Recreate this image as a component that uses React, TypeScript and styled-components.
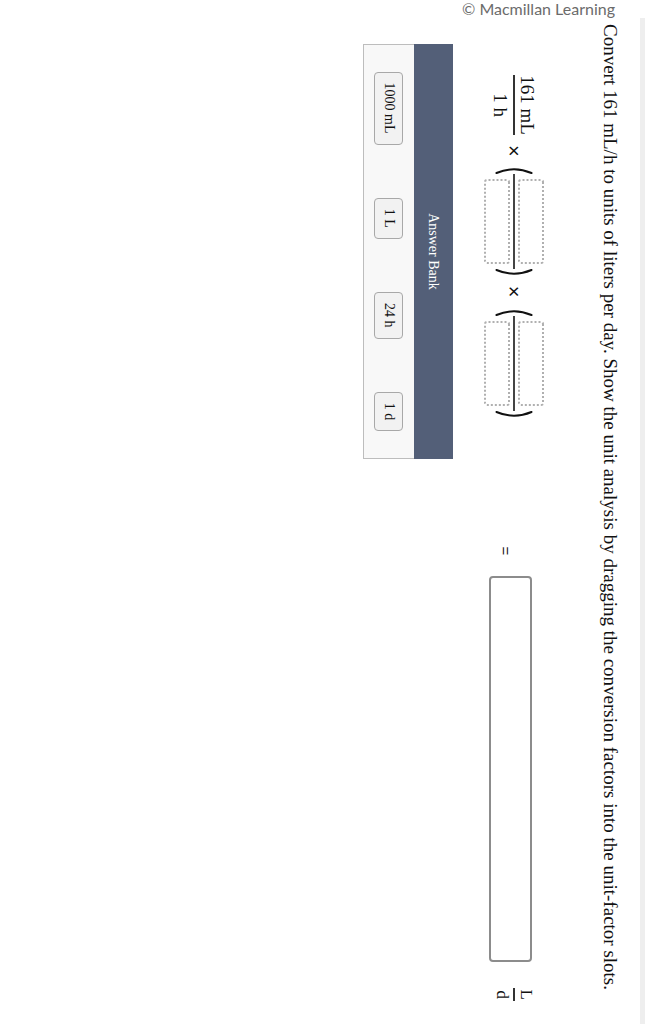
import React from 'react';
import styled, { createGlobalStyle } from 'styled-components';

const Global = createGlobalStyle`
  html, body { margin: 0; padding: 0; background: #ffffff; overflow: hidden; }
  #root { width: 645px; height: 1024px; }
`;

const Page = styled.div`
  position: relative;
  width: 645px;
  height: 1024px;
  overflow: hidden;
  background: #ffffff;
`;

const Copyright = styled.div`
  position: absolute;
  top: 0;
  right: 30px;
  font-family: Lato, "Noto Sans", sans-serif;
  font-size: 16px;
  line-height: 18px;
  color: #6b6b6b;
  white-space: nowrap;
`;

const Stage = styled.div`
  width: 1024px;
  height: 645px;
  display: flex;
  flex-direction: column;
  transform-origin: 0 0;
  transform: translateX(645px) rotate(90deg);
  font-family: "Liberation Serif", "Times New Roman", serif;
  color: #111111;
`;

const TopStrip = styled.div`
  margin-left: 18px;
  height: 5px;
  background: #eeeeee;
`;

const Instruction = styled.p`
  margin: 19px 0 0 24px;
  font-size: 19px;
  line-height: 22px;
  white-space: nowrap;
`;

const EquationRow = styled.div`
  display: flex;
  align-items: center;
  height: 70px;
  margin-top: 50px;
  padding-left: 75px;
`;

const Fraction = styled.div`
  display: flex;
  flex-direction: column;
  align-items: center;
  font-size: 19px;
  line-height: 21px;
`;

const FracLine = styled.div<{ $w: number }>`
  width: ${(p) => p.$w}px;
  height: 2px;
  background: #333333;
  margin: 2px 0;
`;

const Times = styled.span<{ $ml: number; $mr: number }>`
  font-family: "Liberation Sans", Arial, sans-serif;
  font-size: 20px;
  margin: 0 ${(p) => p.$mr}px 0 ${(p) => p.$ml}px;
  line-height: 1;
`;

const SlotColumn = styled.div`
  display: flex;
  flex-direction: column;
  align-items: center;
  gap: 3px;
`;

const Slot = styled.div`
  width: 85px;
  height: 26px;
  box-sizing: border-box;
  border: 2px dotted #b0b0b0;
  border-radius: 3px;
`;

const SlotLine = styled.div`
  width: 95px;
  height: 2px;
  background: #444444;
`;

const ParenSvg = styled.svg<{ $flip?: boolean }>`
  width: 9px;
  height: 38px;
  flex: none;
  transform: ${(p) => (p.$flip ? 'scaleX(-1)' : 'none')};
`;

const Equals = styled.span`
  font-family: "Liberation Sans", Arial, sans-serif;
  font-size: 15px;
  margin: 16px 21px 0 126px;
`;

const AnswerBox = styled.div`
  width: 386px;
  height: 43px;
  margin-top: 6px;
  box-sizing: border-box;
  border: 2px solid #8c8c8c;
  border-radius: 4px;
  background: #ffffff;
`;

const UnitFraction = styled(Fraction)`
  margin-left: 26px;
  font-size: 17px;
  line-height: 18px;
`;

const Bank = styled.div`
  margin: 26px 0 0 44px;
  width: 415px;
  display: flex;
  flex-direction: column;
`;

const BankHeader = styled.div`
  height: 39px;
  background: #535f78;
  color: #ffffff;
  font-size: 14px;
  display: flex;
  align-items: center;
  justify-content: center;
`;

const BankBody = styled.div`
  height: 51px;
  box-sizing: border-box;
  background: #f8f8f8;
  border: 1px solid #bdbdbd;
  border-top: none;
  display: flex;
  align-items: center;
  justify-content: space-around;
`;

const Chip = styled.div`
  height: 29px;
  box-sizing: border-box;
  padding: 0 10px;
  border: 1px solid #a8a8a8;
  border-radius: 4px;
  background: #f2f2f2;
  font-size: 14px;
  display: flex;
  align-items: center;
  white-space: nowrap;
`;

const Paren: React.FC<{ flip?: boolean }> = ({ flip }) => (
  <ParenSvg $flip={flip} viewBox="0 0 9 38">
    <path d="M8 1.5 Q 0.5 19 8 36.5" fill="none" stroke="#111" strokeWidth="2" strokeLinecap="round" />
  </ParenSvg>
);

const SlotGroup: React.FC = () => (
  <>
    <Paren />
    <SlotColumn>
      <Slot />
      <SlotLine />
      <Slot />
    </SlotColumn>
    <Paren flip />
  </>
);

export default function App() {
  return (
    <>
      <Global />
      <Page>
        <Stage>
          <TopStrip />
          <Instruction>
            Convert 161 mL/h to units of liters per day. Show the unit analysis by dragging the conversion factors into the unit-factor slots.
          </Instruction>
          <EquationRow>
            <Fraction>
              <span>161 mL</span>
              <FracLine $w={60} />
              <span>1 h</span>
            </Fraction>
            <Times $ml={10} $mr={8}>×</Times>
            <SlotGroup />
            <Times $ml={8} $mr={10}>×</Times>
            <SlotGroup />
            <Equals>=</Equals>
            <AnswerBox />
            <UnitFraction>
              <span>L</span>
              <FracLine $w={13} />
              <span>d</span>
            </UnitFraction>
          </EquationRow>
          <Bank>
            <BankHeader>Answer Bank</BankHeader>
            <BankBody>
              <Chip>1000 mL</Chip>
              <Chip>1 L</Chip>
              <Chip>24 h</Chip>
              <Chip>1 d</Chip>
            </BankBody>
          </Bank>
        </Stage>
        <Copyright>© Macmillan Learning</Copyright>
      </Page>
    </>
  );
}
